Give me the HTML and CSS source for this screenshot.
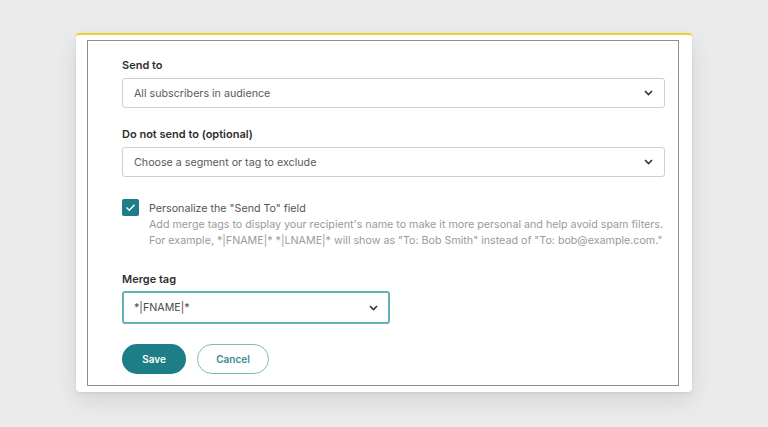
FILE: index.html
```html
<!DOCTYPE html>
<html lang="en">
<head>
<meta charset="utf-8">
<title>Send to settings</title>
<link rel="stylesheet" href="styles.css">
</head>
<body>
<div class="card">
  <div class="frame">
    <div class="field">
      <div class="label">Send to</div>
      <div class="select">
        <span>All subscribers in audience</span>
        <svg class="chev" width="9" height="6" viewBox="0 0 9 6"><path d="M1 1l3.5 3.5L8 1" fill="none" stroke="#333" stroke-width="1.6"/></svg>
      </div>
    </div>
    <div class="field">
      <div class="label">Do not send to (optional)</div>
      <div class="select">
        <span>Choose a segment or tag to exclude</span>
        <svg class="chev" width="9" height="6" viewBox="0 0 9 6"><path d="M1 1l3.5 3.5L8 1" fill="none" stroke="#333" stroke-width="1.6"/></svg>
      </div>
    </div>
    <div class="check-row">
      <div class="checkbox">
        <svg width="11" height="9" viewBox="0 0 11 9"><path d="M1.5 4.5l2.8 2.8L9.5 1.8" fill="none" stroke="#fff" stroke-width="1.4"/></svg>
      </div>
      <div class="check-text">
        <div class="check-title">Personalize the "Send To" field</div>
        <div class="check-desc">Add merge tags to display your recipient's name to make it more personal and help avoid spam filters.<br>For example, *|FNAME|* *|LNAME|* will show as "To: Bob Smith" instead of "To: bob@example.com."</div>
      </div>
    </div>
    <div class="field merge">
      <div class="label">Merge tag</div>
      <div class="select focus">
        <span>*|FNAME|*</span>
        <svg class="chev" width="9" height="6" viewBox="0 0 9 6"><path d="M1 1l3.5 3.5L8 1" fill="none" stroke="#333" stroke-width="1.6"/></svg>
      </div>
    </div>
    <div class="actions">
      <button class="btn primary">Save</button>
      <button class="btn secondary">Cancel</button>
    </div>
  </div>
</div>
</body>
</html>
```
FILE: styles.css
```css
html, body {
  margin: 0;
  padding: 0;
}
body {
  background: #ebebeb;
  font-family: Inter, "Liberation Sans", sans-serif;
  width: 768px;
  height: 427px;
  overflow: hidden;
  padding-top: 33px;
  box-sizing: border-box;
}
.card {
  margin-left: 76px;
  width: 616px;
  height: 359px;
  box-sizing: border-box;
  background: #fff;
  border-top: 2px solid #efcf2c;
  border-radius: 4px;
  box-shadow: 0 8px 22px rgba(0,0,0,0.10), 0 1px 3px rgba(0,0,0,0.08);
  padding: 5px 13px 6px 11px;
}
.frame {
  height: 100%;
  box-sizing: border-box;
  border: 1px solid #8d8d8d;
  padding: 17px 13px 0 34px;
}
.field {
  margin-bottom: 19px;
}
.label {
  font-size: 11px;
  line-height: 14px;
  font-weight: 600;
  color: #2f2f2f;
  margin-bottom: 6px;
}
.select {
  height: 30px;
  box-sizing: border-box;
  border: 1px solid #cfcfcf;
  border-radius: 3px;
  display: flex;
  align-items: center;
  justify-content: space-between;
  padding: 0 11px 0 11px;
  font-size: 10.7px;
  color: #5a5a5a;
}
.select.focus {
  width: 268px;
  height: 33px;
  border: 2px solid #63b2b6;
  padding-left: 10px;
  padding-right: 10px;
  color: #4a4a4a;
}
.check-row {
  display: flex;
  align-items: flex-start;
  margin-top: 22px;
  margin-bottom: 23px;
}
.checkbox {
  width: 17px;
  height: 17px;
  border-radius: 2px;
  background: #1e7e87;
  display: flex;
  align-items: center;
  justify-content: center;
  flex: none;
  margin-right: 10px;
}
.check-text {
  padding-top: 1px;
}
.check-title {
  font-size: 10.7px;
  line-height: 17px;
  color: #555;
}
.check-desc {
  font-size: 10.7px;
  line-height: 16px;
  color: #9a9a9a;
  white-space: nowrap;
}
.merge {
  margin-bottom: 20px;
}
.merge .label {
  margin-bottom: 5px;
}
.actions {
  display: flex;
  gap: 11px;
}
.btn {
  height: 30px;
  border-radius: 15px;
  font-family: Inter, "Liberation Sans", sans-serif;
  font-size: 10px;
  font-weight: 600;
  box-sizing: border-box;
  cursor: pointer;
}
.primary {
  width: 64px;
  background: #1e7e87;
  color: #fff;
  border: none;
}
.secondary {
  width: 72px;
  background: #fff;
  color: #3f8a90;
  border: 1px solid #79bcc0;
}
```
